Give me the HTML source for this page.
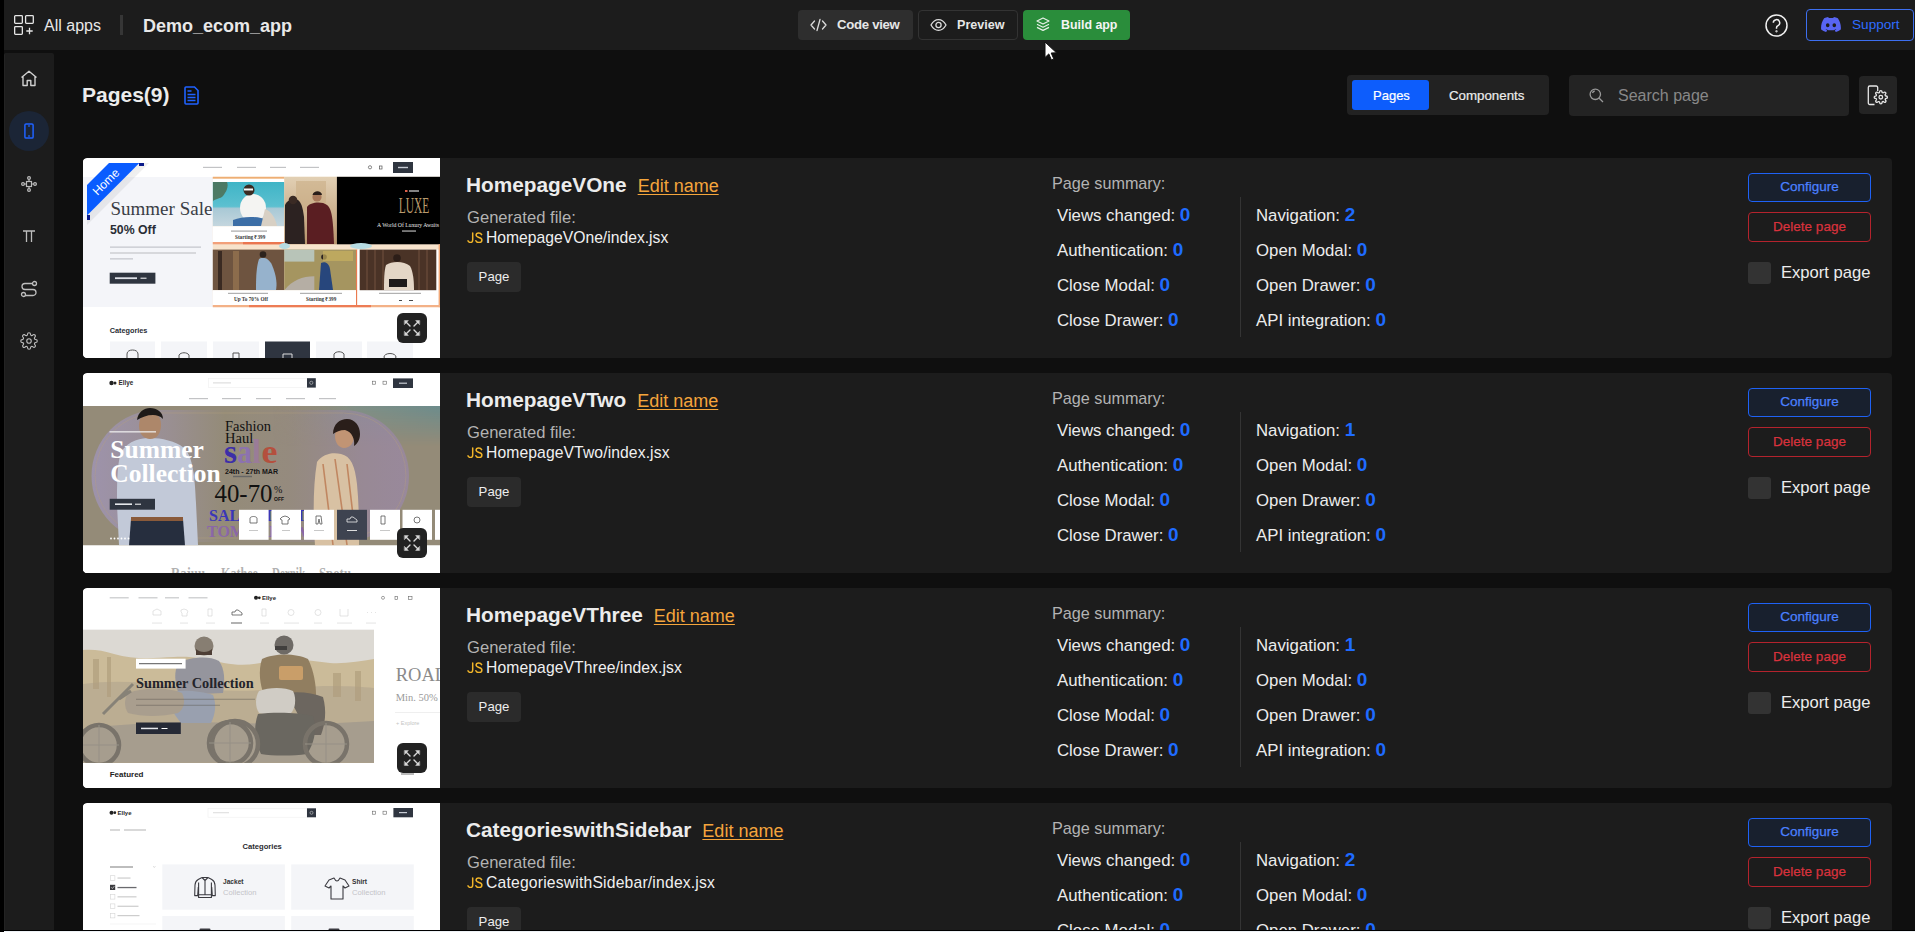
<!DOCTYPE html>
<html><head><meta charset="utf-8">
<style>
*{box-sizing:border-box;margin:0;padding:0}
html,body{width:1915px;height:932px;overflow:hidden;background:#0f0f0f;font-family:"Liberation Sans",sans-serif;color:#ececec}
.abs{position:absolute}
#blk{left:0;top:0;width:4px;height:932px;background:#000}
#hdr{left:4px;top:0;width:1911px;height:50px;background:#1c1c1c}
#side{left:4px;top:53px;width:50px;height:880px;background:#1c1c1c;border-radius:2px 2px 0 0;border-left:1px solid #232323}
.t{position:absolute;white-space:nowrap;line-height:1}
.btn{position:absolute;border-radius:4px}
.card{position:absolute;left:83px;width:1809px;height:200px;background:#1c1c1c;border-radius:4px;overflow:hidden}
.thumb{position:absolute;left:0;top:0;width:357px;height:200px;background:#fff;border-radius:4px 0 0 4px;overflow:hidden}
.ttl{left:383px;top:17px;font-size:20.8px;font-weight:700;color:#ececec}
.edit{margin-left:11px;font-weight:400;font-size:18px;color:#f5a53c;text-decoration:underline;text-underline-offset:2px;text-decoration-thickness:1px}
.gen{left:384px;top:52px;font-size:16.6px;color:#b3b3b3}
.js{left:384px;top:72px;font-size:14.5px;font-weight:400;color:#f0b429;letter-spacing:-1px}
.file{left:403px;top:72px;font-size:15.7px;color:#f0f0f0}
.chip{position:absolute;left:384px;top:104px;width:54px;height:30px;background:#2b2b2b;border-radius:4px;font-size:13.2px;color:#eee;text-align:center;line-height:30px}
.sum{left:969px;top:17px;font-size:16.2px;color:#b3b3b3}
.row{font-size:16.8px;color:#ececec}
.row b{color:#1f6bff;font-size:19px;font-weight:700}
.vdiv{position:absolute;left:1157px;top:39px;width:1px;height:140px;background:#343434}
.cfg{position:absolute;left:1665px;top:15px;width:123px;height:29px;border:1.5px solid #1f62f5;background:#18202e;border-radius:4px;color:#4b80ff;font-size:13.5px;-webkit-text-stroke:.25px #4b80ff;text-align:center;line-height:26px}
.del{position:absolute;left:1665px;top:54px;width:123px;height:30px;border:1.5px solid #b4232d;border-radius:4px;color:#d8323c;font-size:13.5px;-webkit-text-stroke:.25px #d8323c;text-align:center;line-height:27px}
.chk{position:absolute;left:1665px;top:104px;width:23px;height:22px;background:#333;border-radius:3px}
.exp{left:1698px;top:107px;font-size:16.6px;color:#ececec}
.expand{position:absolute;left:314px;top:155px;width:30px;height:30px;background:#222;border-radius:6px}
</style></head><body>
<div id="blk" class="abs"></div>
<div id="hdr" class="abs"></div>
<div id="side" class="abs"></div>

<!-- header -->
<svg class="abs" style="left:14px;top:15px" width="21" height="21" viewBox="0 0 21 21" fill="none" stroke="#e6e6e6" stroke-width="1.3">
<rect x="0.65" y="0.65" width="7.7" height="7.7" rx="0.8"/><rect x="11.6" y="0.65" width="7.7" height="7.7" rx="0.8"/><rect x="0.65" y="11.6" width="7.7" height="7.7" rx="0.8"/>
<path d="M15.5 12.8v6.4M12.3 16h6.4"/></svg>
<div class="t" style="left:44px;top:18px;font-size:16px;color:#e8e8e8">All apps</div>
<div class="abs" style="left:120px;top:15px;width:3px;height:20px;background:#363636"></div>
<div class="t" style="left:143px;top:17px;font-size:18px;font-weight:700;color:#e8e8e8">Demo_ecom_app</div>

<div class="btn" style="left:798px;top:10px;width:115px;height:30px;background:#2e2e2e"></div>
<div class="t" style="left:837px;top:18px;font-size:13.2px;font-weight:700;color:#e6e6e6;letter-spacing:-0.3px">Code view</div>
<div class="btn" style="left:918px;top:10px;width:100px;height:30px;border:1px solid #333"></div>
<div class="t" style="left:957px;top:19px;font-size:12.6px;font-weight:700;color:#e6e6e6">Preview</div>
<div class="btn" style="left:1023px;top:10px;width:107px;height:30px;background:#2a8d3b"></div>
<div class="t" style="left:1061px;top:19px;font-size:12.4px;font-weight:700;color:#f4f4f4">Build app</div>

<svg class="abs" style="left:1765px;top:14px" width="23" height="23" viewBox="0 0 23 23" fill="none" stroke="#f0f0f0" stroke-width="1.5">
<circle cx="11.5" cy="11.5" r="10.5"/><path d="M8.3 8.8a3.2 3.2 0 1 1 4.6 2.9c-.9.4-1.4 1.1-1.4 2.1v.9"/><circle cx="11.5" cy="17.3" r=".4" fill="#f0f0f0"/></svg>
<div class="btn" style="left:1806px;top:9px;width:108px;height:32px;border:1px solid #3d6ff0"></div>
<div class="t" style="left:1852px;top:18px;font-size:13.6px;color:#2f6cff">Support</div>

<!-- title row -->
<div class="t" style="left:82px;top:84px;font-size:21px;font-weight:700;color:#ececec">Pages(9)</div>
<div class="abs" style="left:1347px;top:75px;width:202px;height:40px;background:#222;border-radius:4px"></div>
<div class="btn" style="left:1352px;top:80px;width:77px;height:30px;background:#0d5dfc;border-radius:3px"></div>
<div class="t" style="left:1373px;top:89px;font-size:13px;color:#fff;-webkit-text-stroke:.2px #fff">Pages</div>
<div class="t" style="left:1449px;top:89px;font-size:13.3px;color:#ececec;-webkit-text-stroke:.2px #ececec">Components</div>
<div class="abs" style="left:1569px;top:75px;width:280px;height:41px;background:#232323;border-radius:4px"></div>
<div class="t" style="left:1618px;top:88px;font-size:16px;color:#888">Search page</div>
<div class="abs" style="left:1859px;top:76px;width:38px;height:38px;background:#242424;border-radius:4px"></div>


<svg class="abs" style="left:810px;top:17px" width="17" height="16" viewBox="0 0 17 16" fill="none" stroke="#dcdcdc" stroke-width="1.3" stroke-linecap="round" stroke-linejoin="round"><path d="M4.5 4L1 8l3.5 4M12.5 4L16 8l-3.5 4M10 2.5L7 13.5"/></svg>
<svg class="abs" style="left:930px;top:18px" width="17" height="14" viewBox="0 0 17 14" fill="none" stroke="#dcdcdc" stroke-width="1.3"><path d="M1 7c2-3.6 4.6-5.3 7.5-5.3S14 3.4 16 7c-2 3.6-4.6 5.3-7.5 5.3S3 10.6 1 7z"/><circle cx="8.5" cy="7" r="2.6"/></svg>
<svg class="abs" style="left:1036px;top:17px" width="14" height="15" viewBox="0 0 14 15" fill="none" stroke="#e8f0e8" stroke-width="1.2" stroke-linejoin="round"><path d="M7 1L1 4l6 3 6-3zM1 7.2l6 3 6-3M1 10.4l6 3 6-3"/></svg>
<svg class="abs" style="left:1044px;top:41px" width="14" height="20" viewBox="0 0 14 20"><path d="M1 1v15.5l3.8-3.6 2.6 6 2.4-1-2.6-5.9 5.3-.2z" fill="#fff" stroke="#111" stroke-width="1"/></svg>
<svg class="abs" style="left:1820px;top:17px" width="22" height="15" viewBox="0 0 127 96"><path fill="#5865f2" d="M107.7 8.1A105 105 0 0 0 81.5 0a72 72 0 0 0-3.4 6.8 97.7 97.7 0 0 0-29.1 0A72 72 0 0 0 45.6 0a105.9 105.9 0 0 0-26.3 8.1C2.7 32.6-1.8 56.6.4 80.2a105.7 105.7 0 0 0 32.2 16.1 77.7 77.7 0 0 0 6.9-11.1 68.4 68.4 0 0 1-10.9-5.2c.9-.7 1.8-1.4 2.6-2.1a75.6 75.6 0 0 0 64.3 0c.9.7 1.7 1.4 2.6 2.1a68.7 68.7 0 0 1-10.9 5.2 77 77 0 0 0 6.9 11.1 105.3 105.3 0 0 0 32.2-16.1c2.6-27.3-4.5-51.1-18.9-72.1zM42.5 65.7c-6.3 0-11.4-5.7-11.4-12.7s5-12.8 11.4-12.8S54 46 53.9 53s-5 12.7-11.4 12.7zm42.2 0c-6.2 0-11.4-5.7-11.4-12.7s5-12.8 11.4-12.8S96.2 46 96.1 53s-5 12.7-11.4 12.7z"/></svg>
<svg class="abs" style="left:184px;top:86px" width="15" height="19" viewBox="0 0 15 19" fill="none" stroke="#1f62ff" stroke-width="1.6"><path d="M2 1h8.5L14 4.5V17a1 1 0 0 1-1 1H2a1 1 0 0 1-1-1V2a1 1 0 0 1 1-1z"/><path d="M3.5 5h4M3.5 8.5h8M3.5 11.5h8M3.5 14.5h8" stroke-width="1.5"/></svg>
<svg class="abs" style="left:1589px;top:88px" width="15" height="15" viewBox="0 0 15 15" fill="none" stroke="#9a9a9a" stroke-width="1.3"><circle cx="6.3" cy="6.3" r="5.2"/><path d="M10.2 10.2l3.8 3.8M3.5 5a3 3 0 0 1 2.2-2" /></svg>
<svg class="abs" style="left:1866px;top:84px" width="24" height="24" viewBox="0 0 24 24" fill="none" stroke="#e6e6e6" stroke-width="1.3"><path d="M8.5 20.5H3.8a1.5 1.5 0 0 1-1.5-1.5V3.5A1.5 1.5 0 0 1 3.8 2h6.4a1.5 1.5 0 0 1 1.5 1.5V7"/><g transform="translate(7.6 6) scale(.6)" stroke-width="2.2"><circle cx="12" cy="12" r="3"/><path d="M19.4 15a1.7 1.7 0 0 0 .3 1.8l.1.1a2 2 0 1 1-2.8 2.8l-.1-.1a1.7 1.7 0 0 0-1.8-.3 1.7 1.7 0 0 0-1 1.5V21a2 2 0 1 1-4 0v-.1a1.7 1.7 0 0 0-1.1-1.5 1.7 1.7 0 0 0-1.8.3l-.1.1a2 2 0 1 1-2.8-2.8l.1-.1a1.7 1.7 0 0 0 .3-1.8 1.7 1.7 0 0 0-1.5-1H3a2 2 0 1 1 0-4h.1a1.7 1.7 0 0 0 1.5-1.1 1.7 1.7 0 0 0-.3-1.8l-.1-.1a2 2 0 1 1 2.8-2.8l.1.1a1.7 1.7 0 0 0 1.8.3H9a1.7 1.7 0 0 0 1-1.5V3a2 2 0 1 1 4 0v.1a1.7 1.7 0 0 0 1 1.5 1.7 1.7 0 0 0 1.8-.3l.1-.1a2 2 0 1 1 2.8 2.8l-.1.1a1.7 1.7 0 0 0-.3 1.8V9a1.7 1.7 0 0 0 1.5 1H21a2 2 0 1 1 0 4h-.1a1.7 1.7 0 0 0-1.5 1z"/></g></svg>
<!-- sidebar -->
<svg class="abs" style="left:20px;top:70px" width="18" height="17" viewBox="0 0 18 17" fill="none" stroke="#cfcfcf" stroke-width="1.4" stroke-linejoin="round"><path d="M1.5 7.5L9 1.2l7.5 6.3M3 6.5V15.5h4.2v-5h3.6v5H15V6.5"/></svg>
<div class="abs" style="left:9px;top:111px;width:40px;height:40px;border-radius:50%;background:#1b2536"></div>
<svg class="abs" style="left:24px;top:123px" width="10" height="16" viewBox="0 0 10 16" fill="none" stroke="#1f62ff" stroke-width="1.5"><rect x="0.9" y="0.9" width="8.2" height="14.2" rx="1.2"/><path d="M4.2 3h1.6M4.2 13h1.6"/></svg>
<svg class="abs" style="left:21px;top:176px" width="16" height="16" viewBox="0 0 16 16" fill="none" stroke="#bdbdbd" stroke-width="1.2"><rect x="5.5" y="5.5" width="5" height="5"/><circle cx="8" cy="2" r="1.4"/><circle cx="8" cy="14" r="1.4"/><circle cx="2" cy="8" r="1.4"/><circle cx="14" cy="8" r="1.4"/><path d="M8 3.4v2.1M8 10.5v2.1M3.4 8h2.1M10.5 8h2.1"/></svg>
<svg class="abs" style="left:22px;top:229px" width="14" height="14" viewBox="0 0 14 14" fill="none" stroke="#bdbdbd" stroke-width="1.3"><path d="M1 2h12M4.5 2v11M9.5 2v11"/></svg>
<svg class="abs" style="left:20px;top:280px" width="18" height="18" viewBox="0 0 18 18" fill="none" stroke="#bdbdbd" stroke-width="1.3"><circle cx="3.5" cy="14.5" r="2"/><circle cx="14.5" cy="3.5" r="2"/><path d="M12.5 3.5H5a3 3 0 0 0 0 6h8a3 3 0 0 1 0 6H5.5"/></svg>
<svg class="abs" style="left:20px;top:332px" width="18" height="18" viewBox="0 0 24 24" fill="none" stroke="#bdbdbd" stroke-width="1.5"><circle cx="12" cy="12" r="3"/><path d="M19.4 15a1.7 1.7 0 0 0 .3 1.8l.1.1a2 2 0 1 1-2.8 2.8l-.1-.1a1.7 1.7 0 0 0-1.8-.3 1.7 1.7 0 0 0-1 1.5V21a2 2 0 1 1-4 0v-.1a1.7 1.7 0 0 0-1.1-1.5 1.7 1.7 0 0 0-1.8.3l-.1.1a2 2 0 1 1-2.8-2.8l.1-.1a1.7 1.7 0 0 0 .3-1.8 1.7 1.7 0 0 0-1.5-1H3a2 2 0 1 1 0-4h.1a1.7 1.7 0 0 0 1.5-1.1 1.7 1.7 0 0 0-.3-1.8l-.1-.1a2 2 0 1 1 2.8-2.8l.1.1a1.7 1.7 0 0 0 1.8.3H9a1.7 1.7 0 0 0 1-1.5V3a2 2 0 1 1 4 0v.1a1.7 1.7 0 0 0 1 1.5 1.7 1.7 0 0 0 1.8-.3l.1-.1a2 2 0 1 1 2.8 2.8l-.1.1a1.7 1.7 0 0 0-.3 1.8V9a1.7 1.7 0 0 0 1.5 1H21a2 2 0 1 1 0 4h-.1a1.7 1.7 0 0 0-1.5 1z"/></svg>
<div class="abs" style="left:4px;top:930px;width:1911px;height:1px;background:#000;z-index:10"></div>
<div class="abs" style="left:4px;top:931px;width:1911px;height:1px;background:#eef2f6;z-index:10"></div>
<div id="cards"><div class="card" style="top:158px">
<div class="thumb"><svg width="357" height="199" viewBox="0 0 357 199" style="position:absolute;left:0;top:1px" font-family="Liberation Sans">
<defs>
<linearGradient id="t0sky" x1="0" y1="0" x2="0" y2="1"><stop offset="0" stop-color="#3fb4c6"/><stop offset="0.55" stop-color="#5cc0d0"/><stop offset="0.6" stop-color="#a9c9d6"/><stop offset="1" stop-color="#c4d6de"/></linearGradient>
<linearGradient id="t0mid" x1="0" y1="0" x2="0" y2="1"><stop offset="0" stop-color="#e2d0b4"/><stop offset="1" stop-color="#b8946c"/></linearGradient>
<linearGradient id="t0shadow" x1="0" y1="0" x2="1" y2="1"><stop offset="0" stop-color="#000" stop-opacity=".12"/><stop offset="1" stop-color="#000" stop-opacity="0"/></linearGradient>
</defs>
<rect width="357" height="199" fill="#fff"/>
<rect x="0" y="18" width="131" height="130" fill="#f4f5f9"/>
<g fill="#9a9ca0" opacity=".6"><rect x="120" y="7.8" width="19" height="1.2"/><rect x="154" y="7.8" width="19" height="1.2"/><rect x="187" y="7.8" width="16" height="1.2"/><rect x="217" y="7.8" width="19" height="1.2"/></g>
<circle cx="287" cy="8.3" r="1.6" fill="none" stroke="#555" stroke-width=".7"/><rect x="296.5" y="7" width="2.5" height="3" fill="none" stroke="#555" stroke-width=".7"/>
<rect x="310" y="3" width="20" height="11" fill="#2f3540"/><rect x="315" y="7.8" width="10" height="1.4" fill="#c8ccd4"/>
<text x="27.5" y="55.7" font-family="Liberation Serif" font-size="19" fill="#3a3d45">Summer Sale</text>
<text x="27" y="75.2" font-weight="700" font-size="12.3" fill="#2a2d35">50% Off</text>
<g fill="#8a8c94" opacity=".55"><rect x="27" y="87.6" width="91" height="1"/><rect x="27" y="93.5" width="86" height="1"/><rect x="27" y="99.4" width="23" height="1"/></g>
<rect x="26.7" y="113.7" width="45.7" height="11" fill="#2f3540"/><rect x="32" y="118.3" width="22" height="1.8" fill="#dfe2e8"/><path d="M57.5 119.2h6" stroke="#fff" stroke-width="1"/>
<!-- collage -->
<rect x="129.8" y="17.8" width="227.2" height="130.4" fill="#f7e3cc"/>
<rect x="129.8" y="17.8" width="71.5" height="2" fill="#eeae74"/>
<rect x="129.8" y="19.8" width="71.5" height="3.4" fill="#fff"/>
<rect x="129.8" y="23" width="71.5" height="44.3" fill="url(#t0sky)"/>
<path d="M130 23h14c2 5-1 10-4 14-3 3-6 2-10 5z" fill="#4d6f52" opacity=".85"/>
<ellipse cx="170" cy="49" rx="13" ry="14" fill="#f4f4f2"/>
<circle cx="166" cy="31" r="5.5" fill="#3a2b22"/><rect x="161" y="29.5" width="9" height="2" fill="#f8f8f8"/>
<path d="M150 61c10-4 25-4 34 0v6h-34z" fill="#3c6ea6"/>
<path d="M182 50c6 2 10 8 12 17h-16z" fill="#d8d0c4"/>
<rect x="129.8" y="67.3" width="71.5" height="15.7" fill="#fff"/>
<rect x="148" y="71.5" width="36" height="1.2" fill="#a8a8a8"/>
<text x="152" y="80" font-family="Liberation Serif" font-weight="700" font-size="5.2" fill="#333">Starting ₹399</text>
<rect x="129.8" y="83" width="71.5" height="2.3" fill="#f2a07a"/><rect x="160" y="83" width="41" height="2.3" fill="#ea7650"/>
<rect x="201.3" y="17.8" width="52.6" height="67.5" fill="url(#t0mid)"/>
<rect x="213" y="22" width="30" height="30" fill="#c9ad86" opacity=".6"/>
<path d="M202 46c3-6 9-7 13-5 4 3 5 10 6 17l1 27h-20z" fill="#2c2221"/>
<circle cx="210" cy="41" r="4.3" fill="#3a2a24"/>
<path d="M224 48c3-5 15-6 20-2 5 4 6 14 7 39h-27z" fill="#5a1e22"/>
<circle cx="234" cy="38" r="4.6" fill="#a8785a"/><path d="M229.5 36c1-5 9-5 9.5 0z" fill="#2a1e1a"/>
<rect x="253.9" y="17.8" width="103.1" height="67.5" fill="#000"/>
<rect x="322" y="31" width="2.5" height="2" fill="#e0604a"/><rect x="326" y="31.3" width="10" height="1.4" fill="#bbb"/>
<text x="315.7" y="53.8" font-family="Liberation Serif" font-size="23" fill="#b99a6c" textLength="30.5" lengthAdjust="spacingAndGlyphs">LUXE</text>
<text x="294" y="67.8" font-family="Liberation Serif" font-size="5.5" fill="#e8e8e8" textLength="62" lengthAdjust="spacingAndGlyphs">A World Of Luxury Awaits</text>
<rect x="319" y="71.4" width="14" height="1.3" fill="#aaa"/>
<ellipse cx="201.5" cy="87" rx="5.5" ry="3" fill="#b6dbe2"/><ellipse cx="278" cy="87" rx="11" ry="3" fill="#b6dbe2"/>
<rect x="129.8" y="90.6" width="71.5" height="40.6" fill="#6e5440"/>
<rect x="135" y="92" width="4" height="39" fill="#3a2a22"/><rect x="150" y="92" width="6" height="39" fill="#8c6c4c"/>
<path d="M176 100c5-3 10 0 13 6 5 12 5 20 4 25h-20c0-10 0-22 3-31z" fill="#96b2cc"/>
<circle cx="180" cy="95.5" r="3.3" fill="#2c221c"/>
<rect x="201.3" y="90.6" width="71.7" height="40.6" fill="#a59560"/>
<rect x="201.3" y="90.6" width="30" height="12" fill="#b8c4b8"/>
<path d="M201.3 131.2c8-10 18-14 30-14v14z" fill="#b5aea4"/>
<path d="M238 104c4-2 8 0 9 6l3 21h-14z" fill="#27467c"/><circle cx="241" cy="98" r="2.8" fill="#2a2220"/>
<rect x="240" y="92" width="30" height="10" fill="#c8b060" opacity=".7"/>
<rect x="273" y="90.6" width="1.3" height="55.4" fill="#ea7a50"/>
<rect x="274.3" y="90.6" width="82.7" height="57.6" fill="#fff"/>
<rect x="276.7" y="90.6" width="76.6" height="40.6" fill="#4a3326"/>
<g fill="#5e4232"><rect x="283" y="91" width="2" height="40"/><rect x="291" y="91" width="2" height="40"/><rect x="299" y="91" width="2" height="40"/><rect x="335" y="91" width="2" height="40"/><rect x="343" y="91" width="2" height="40"/></g>
<path d="M303 106c6-4 18-4 24 1 3 5 4 14 4 24h-30c0-9 0-19 2-25z" fill="#e4d6c6"/><circle cx="314" cy="99" r="3.8" fill="#2c1e18"/>
<rect x="306" y="120" width="18" height="8" fill="#1e1a1a"/>
<rect x="355.6" y="85.3" width="1.4" height="62.9" fill="#f0a878"/>
<rect x="129.8" y="131.2" width="143.2" height="14.8" fill="#fff"/>
<g fill="#a9a9a9"><rect x="145" y="133.8" width="40" height="1.1"/><rect x="217" y="133.8" width="42" height="1.1"/><rect x="296" y="133.8" width="42" height="1.1"/></g>
<text x="151" y="142" font-family="Liberation Serif" font-weight="700" font-size="5.2" fill="#333">Up To 70% Off</text>
<text x="223" y="142" font-family="Liberation Serif" font-weight="700" font-size="5.2" fill="#333">Starting ₹399</text>
<path d="M316 141.5h3M326 141.5h4" stroke="#333" stroke-width=".9"/>
<rect x="129.8" y="146" width="227.2" height="2.2" fill="#f3b187"/><rect x="166" y="146" width="122" height="2.2" fill="#ed7c55"/>
<!-- home ribbon -->
<path d="M56.5 4L4 56.5V66L66 4z" fill="url(#t0shadow)"/>
<path d="M26 4H56.4L4 56.4V26z" fill="#0a5cff"/>
<rect x="56" y="4" width="5" height="3" fill="#0a1a8a"/><rect x="4" y="56" width="3" height="5" fill="#0a1a8a"/>
<text x="0" y="0" transform="translate(25.8 25.8) rotate(-45)" font-size="12" fill="#fff" text-anchor="middle">Home</text>
<!-- categories -->
<text x="26.7" y="174.4" font-weight="700" font-size="7.3" fill="#2a2d35">Categories</text>
<g fill="#f4f5f8"><rect x="27" y="182.5" width="45" height="17"/><rect x="78" y="182.5" width="46" height="17"/><rect x="130" y="182.5" width="46" height="17"/><rect x="233" y="182.5" width="46" height="17"/><rect x="284" y="182.5" width="46" height="17"/></g>
<rect x="182" y="182.5" width="45" height="17" fill="#2f3540"/>
<g fill="none" stroke="#555" stroke-width="1"><path d="M44 199v-4c0-3 3-4 5.5-4s5.5 1 5.5 4v4"/><path d="M96 199v-3c2-3 8-3 10 0v3"/><path d="M150 199v-5h6v5"/><path d="M251 199v-4c2-3 8-3 10 0v4"/><ellipse cx="307" cy="198" rx="6" ry="3.5"/></g>
<path d="M200 199v-4h9v4" fill="none" stroke="#ddd" stroke-width="1"/>
</svg>

<div class="expand"><svg width="30" height="30" viewBox="0 0 30 30" fill="#d8d8d8" stroke="#d8d8d8" stroke-width="1.5" stroke-linecap="round"><path d="M9 9l4 4M21 9l-4 4M9 21l4-4M21 21l-4-4" fill="none" stroke-width="1.4"/><path d="M7.6 7.6h3.8l-3.8 3.8zM22.4 7.6h-3.8l3.8 3.8zM7.6 22.4h3.8l-3.8-3.8zM22.4 22.4h-3.8l3.8-3.8z" stroke-width=".5" stroke-linejoin="round"/></svg></div>
</div>
<div class="t ttl">HomepageVOne<span class="edit">Edit name</span></div>
<div class="t gen">Generated file:</div>
<svg class="abs" style="left:384px;top:73.5px" width="16" height="11.5" viewBox="0 0 16 11.5" fill="none" stroke="#f0b429" stroke-width="1.5" stroke-linecap="round"><path d="M1 8.9c.6 1 1.4 1.6 2.4 1.6 1.4 0 2.3-.9 2.3-2.6V1"/><path d="M14.6 2.6c-.5-1.1-1.5-1.7-2.8-1.7-1.6 0-2.7.9-2.7 2.2 0 3 5.8 1.8 5.8 4.9 0 1.5-1.2 2.6-3 2.6-1.4 0-2.5-.7-3-1.8"/></svg>
<div class="t file" style="letter-spacing:0px">HomepageVOne/index.jsx</div>
<div class="chip">Page</div>
<div class="t sum">Page summary:</div>
<div class="vdiv"></div>
<div class="t row" style="left:974px;top:47px">Views changed: <b>0</b></div><div class="t row" style="left:974px;top:82px">Authentication: <b>0</b></div><div class="t row" style="left:974px;top:117px">Close Modal: <b>0</b></div><div class="t row" style="left:974px;top:152px">Close Drawer: <b>0</b></div><div class="t row" style="left:1173px;top:47px">Navigation: <b>2</b></div><div class="t row" style="left:1173px;top:82px">Open Modal: <b>0</b></div><div class="t row" style="left:1173px;top:117px">Open Drawer: <b>0</b></div><div class="t row" style="left:1173px;top:152px">API integration: <b>0</b></div>
<div class="cfg">Configure</div>
<div class="del">Delete page</div>
<div class="chk"></div>
<div class="t exp">Export page</div>
</div>
<div class="card" style="top:373px">
<div class="thumb"><svg width="357" height="199" viewBox="0 0 357 199" style="position:absolute;left:0;top:1px" font-family="Liberation Sans">
<defs>
<linearGradient id="t1top" x1="0" y1="0" x2="1" y2="0"><stop offset="0" stop-color="#958b79" stop-opacity="0"/><stop offset="0.5" stop-color="#7f8f86"/><stop offset="1" stop-color="#6c8c8c"/></linearGradient>
<linearGradient id="t1v" x1="0" y1="0" x2="0" y2="1"><stop offset="0" stop-color="#fff" stop-opacity="1"/><stop offset="1" stop-color="#fff" stop-opacity="0"/></linearGradient>
<linearGradient id="t1pill" x1="0" y1="0" x2="1" y2="0"><stop offset="0" stop-color="#9f94b4" stop-opacity=".85"/><stop offset=".25" stop-color="#a094b0" stop-opacity=".45"/><stop offset=".42" stop-color="#a094b0" stop-opacity="0"/><stop offset=".62" stop-color="#9a88a0" stop-opacity=".15"/><stop offset=".85" stop-color="#9a88a4" stop-opacity=".65"/><stop offset="1" stop-color="#9a88a4" stop-opacity=".8"/></linearGradient>
<mask id="t1m"><rect x="0" y="32" width="357" height="40" fill="url(#t1v)"/></mask>
</defs>
<rect width="357" height="199" fill="#fff"/>
<!-- nav -->
<circle cx="28.5" cy="9" r="2.2" fill="#222"/><circle cx="32" cy="9" r="1.5" fill="#222"/>
<text x="35.5" y="11.3" font-weight="700" font-size="6.3" fill="#2a2a2a">Ellye</text>
<rect x="125.4" y="4.4" width="99" height="9" fill="#fff" stroke="#efefef" stroke-width=".6"/>
<rect x="130" y="8.4" width="18" height="1" fill="#d8d8d8"/>
<rect x="224" y="4.2" width="8.8" height="9.4" fill="#2f3540"/><circle cx="228.3" cy="8.8" r="1.6" fill="none" stroke="#ccc" stroke-width=".6"/>
<rect x="289.5" y="7.2" width="3" height="3" fill="none" stroke="#666" stroke-width=".6"/><rect x="300" y="7.2" width="3.6" height="3" fill="none" stroke="#666" stroke-width=".6"/>
<rect x="310" y="4.4" width="20" height="9.6" fill="#2f3540"/><rect x="316" y="8.6" width="8" height="1.2" fill="#c8ccd4"/>
<g fill="#9a9ca0" opacity=".6"><rect x="106" y="24" width="19" height="1.2"/><rect x="139" y="24" width="19" height="1.2"/><rect x="173" y="24" width="15" height="1.2"/><rect x="203" y="24" width="19" height="1.2"/><rect x="236" y="24" width="17" height="1.2"/></g>
<!-- banner -->
<rect x="0" y="32" width="357" height="139.5" fill="#948b78"/>
<rect x="190" y="32" width="167" height="40" fill="url(#t1top)" mask="url(#t1m)"/>
<rect x="8.5" y="36" width="317.5" height="132" rx="66" fill="url(#t1pill)"/>
<rect x="12" y="39" width="311" height="125" rx="62.5" fill="none" stroke="#b8a27c" stroke-width=".6" opacity=".6"/>

<!-- man -->
<path d="M38 78c8-12 20-14 30-14s25 3 33 10c9 8 11 30 12 55l2 42H36l-2-40c0-22 0-40 4-53z" fill="#c2c9d8"/>
<path d="M48 145h52l2 26.5H46z" fill="#262e3e"/><rect x="48" y="143" width="52" height="4" fill="#8a5a3a"/>
<path d="M56 52c0-10 6-14 11-14 6 0 11 4 11 13 0 8-4 14-11 14-6 0-11-5-11-13z" fill="#ad876a"/>
<path d="M54 46c1-8 7-12 13-12 7 0 13 4 13 11-3-3-6-4-10-4-6 0-11 2-16 5z" fill="#1e1a18"/>
<!-- woman -->
<path d="M234 88c6-8 15-10 24-8 10 2 14 12 16 30 2 20 2 40 2 61.5h-44c-2-30-2-60 2-83.5z" fill="#d8c1a3"/>
<g stroke="#b4683e" stroke-width="1.6" opacity=".65"><path d="M240 90l10 81M252 85l12 86M264 90l7 60"/></g>
<path d="M252 62c0-7 5-11 10-11s9 4 9 11-4 12-10 12c-5 0-9-5-9-12z" fill="#c19474"/>
<path d="M250 60c0-10 7-15 14-15 8 0 13 7 13 15 0 6-3 10-6 12 1-7-2-14-9-16-5 0-9 2-12 4z" fill="#2a1e1a"/>
<!-- text -->
<rect x="26.5" y="57" width="46.5" height="1.6" fill="#f2f2f2" opacity=".75"/>
<text x="27.3" y="84" font-family="Liberation Serif" font-weight="700" font-size="25.5" fill="#fff">Summer</text>
<text x="27.3" y="108" font-family="Liberation Serif" font-weight="700" font-size="25.5" fill="#fff">Collection</text>
<rect x="26.7" y="124.8" width="45.3" height="10.9" fill="#2f3540"/><rect x="32" y="129.4" width="17" height="1.6" fill="#e6e8ec"/><path d="M52 130.2h6" stroke="#fff" stroke-width="1"/>
<g fill="#fff"><circle cx="28" cy="164.5" r=".9"/><circle cx="31.5" cy="164.5" r=".9"/><circle cx="35" cy="164.5" r=".9"/><circle cx="38.5" cy="164.5" r=".9"/><circle cx="42" cy="164.5" r=".9"/><circle cx="45.5" cy="164.5" r=".9"/></g>
<text x="142" y="56.8" font-family="Liberation Serif" font-size="14.5" fill="#111">Fashion</text>
<text x="142" y="68.5" font-family="Liberation Serif" font-size="14.5" fill="#111">Haul</text>
<g font-family="Liberation Serif" font-weight="700" font-size="33"><text x="141" y="88.5" fill="#3d2fa8" textLength="13" lengthAdjust="spacingAndGlyphs">s</text><text x="154" y="88.5" fill="#8c72b0" textLength="15" lengthAdjust="spacingAndGlyphs">a</text><text x="169" y="88.5" fill="#9a7c98" textLength="9" lengthAdjust="spacingAndGlyphs">l</text><text x="178.5" y="88.5" fill="#b4503e" textLength="16" lengthAdjust="spacingAndGlyphs">e</text></g>
<text x="142" y="99.6" font-weight="700" font-size="7.2" fill="#151515" textLength="53" lengthAdjust="spacingAndGlyphs">24th - 27th MAR</text>
<rect x="150" y="101.8" width="19" height="1.4" fill="#666"/>
<text x="131.5" y="128.3" font-family="Liberation Serif" font-size="25" fill="#111" textLength="58" lengthAdjust="spacingAndGlyphs">40-70</text>
<text x="191" y="119" font-family="Liberation Serif" font-size="10" fill="#111">%</text>
<text x="191" y="127" font-weight="700" font-size="5" fill="#111">OFF</text>
<text x="126" y="147" font-family="Liberation Serif" font-weight="700" font-size="16" fill="#3a36b8">SALE STARTS</text>
<text x="124" y="163" font-family="Liberation Serif" font-weight="700" font-size="16" fill="#8a66a8">TOMORROW</text>
<!-- tiles -->
<g fill="#fff"><rect x="156" y="135.8" width="29.6" height="30"/><rect x="188.5" y="135.8" width="29.5" height="30"/><rect x="221" y="135.8" width="30" height="30"/><rect x="287" y="135.8" width="30" height="30"/><rect x="319.5" y="135.8" width="29.5" height="30"/><rect x="352" y="135.8" width="5" height="30"/></g>
<rect x="254" y="135.8" width="30" height="30" fill="#3e4350"/>
<g fill="none" stroke="#555" stroke-width=".8"><path d="M167 149v-5c1-2 6-2 7 0v5z"/><path d="M199 143l3-1 3 1 2 2-2 1v4h-6v-4l-2-1z"/><path d="M233 142h5l1 8h-2l-1-5-1 5h-2z"/><path d="M298 142h4v8h-4z"/><circle cx="334" cy="146" r="3"/></g>
<path d="M264 148h10v-2l-4-3h-2l-1 2h-3z" fill="none" stroke="#eee" stroke-width=".8"/>
<g fill="#c8c8c8"><rect x="166" y="156" width="9" height="1"/><rect x="199" y="156" width="8" height="1"/><rect x="231" y="156" width="10" height="1"/><rect x="297" y="156" width="10" height="1"/></g><rect x="264" y="156" width="10" height="1" fill="#ddd"/>
<!-- bottom -->
<rect x="0" y="171.5" width="357" height="27.5" fill="#fff"/>
<g font-family="Liberation Serif" font-weight="700" font-size="16" fill="#b0b0b0"><text x="88" y="205" textLength="34" lengthAdjust="spacingAndGlyphs">Rajuu</text><text x="138" y="205" textLength="37" lengthAdjust="spacingAndGlyphs">Kathee</text><text x="189" y="205" textLength="33" lengthAdjust="spacingAndGlyphs">Dernik</text><text x="236" y="205" textLength="32" lengthAdjust="spacingAndGlyphs">Spotu</text></g>
</svg>

<div class="expand"><svg width="30" height="30" viewBox="0 0 30 30" fill="#d8d8d8" stroke="#d8d8d8" stroke-width="1.5" stroke-linecap="round"><path d="M9 9l4 4M21 9l-4 4M9 21l4-4M21 21l-4-4" fill="none" stroke-width="1.4"/><path d="M7.6 7.6h3.8l-3.8 3.8zM22.4 7.6h-3.8l3.8 3.8zM7.6 22.4h3.8l-3.8-3.8zM22.4 22.4h-3.8l3.8-3.8z" stroke-width=".5" stroke-linejoin="round"/></svg></div>
</div>
<div class="t ttl">HomepageVTwo<span class="edit">Edit name</span></div>
<div class="t gen">Generated file:</div>
<svg class="abs" style="left:384px;top:73.5px" width="16" height="11.5" viewBox="0 0 16 11.5" fill="none" stroke="#f0b429" stroke-width="1.5" stroke-linecap="round"><path d="M1 8.9c.6 1 1.4 1.6 2.4 1.6 1.4 0 2.3-.9 2.3-2.6V1"/><path d="M14.6 2.6c-.5-1.1-1.5-1.7-2.8-1.7-1.6 0-2.7.9-2.7 2.2 0 3 5.8 1.8 5.8 4.9 0 1.5-1.2 2.6-3 2.6-1.4 0-2.5-.7-3-1.8"/></svg>
<div class="t file" style="letter-spacing:0.1px">HomepageVTwo/index.jsx</div>
<div class="chip">Page</div>
<div class="t sum">Page summary:</div>
<div class="vdiv"></div>
<div class="t row" style="left:974px;top:47px">Views changed: <b>0</b></div><div class="t row" style="left:974px;top:82px">Authentication: <b>0</b></div><div class="t row" style="left:974px;top:117px">Close Modal: <b>0</b></div><div class="t row" style="left:974px;top:152px">Close Drawer: <b>0</b></div><div class="t row" style="left:1173px;top:47px">Navigation: <b>1</b></div><div class="t row" style="left:1173px;top:82px">Open Modal: <b>0</b></div><div class="t row" style="left:1173px;top:117px">Open Drawer: <b>0</b></div><div class="t row" style="left:1173px;top:152px">API integration: <b>0</b></div>
<div class="cfg">Configure</div>
<div class="del">Delete page</div>
<div class="chk"></div>
<div class="t exp">Export page</div>
</div>
<div class="card" style="top:588px">
<div class="thumb"><svg width="357" height="199" viewBox="0 0 357 199" style="position:absolute;left:0;top:1px" font-family="Liberation Sans">
<defs>
<linearGradient id="t2sky" x1="0" y1="0" x2="0" y2="1"><stop offset="0" stop-color="#dcdad6"/><stop offset=".25" stop-color="#d4d0c8"/><stop offset=".45" stop-color="#c2b496"/><stop offset="1" stop-color="#a89a80"/></linearGradient>
</defs>
<rect width="357" height="199" fill="#fff"/>
<g fill="#9a9ca0" opacity=".55"><rect x="26.7" y="8.2" width="19" height="1.2"/><rect x="55.5" y="8.2" width="19" height="1.2"/><rect x="82" y="8.2" width="14" height="1.2"/><rect x="105.5" y="8.2" width="19" height="1.2"/></g>
<circle cx="173" cy="8.8" r="2" fill="#222"/><circle cx="176.3" cy="8.8" r="1.4" fill="#222"/>
<text x="179" y="11" font-weight="700" font-size="6" fill="#2a2a2a">Ellye</text>
<g fill="none" stroke="#666" stroke-width=".6"><circle cx="300" cy="8.8" r="1.5"/><rect x="312" y="7.3" width="2.6" height="3"/><rect x="325.5" y="7.3" width="3.5" height="3"/></g>
<g fill="none" stroke="#d2d2d2" stroke-width=".6"><path d="M70 26h8v-4l-4-2-4 2z"/><path d="M98 21l3-1 3 1 1 2-1 1v3h-5v-3l-1-1z"/><path d="M125 20h4v7h-4z"/><path d="M179 20h4v7h-4z"/><circle cx="208" cy="23.5" r="3"/><circle cx="235" cy="23.5" r="3"/><path d="M257 20v7h8v-7"/><path d="M284 23.5h1M288 23.5h1M292 23.5h1"/></g>
<path d="M149 26h10v-2l-4-3h-2l-1 2h-3z" fill="none" stroke="#444" stroke-width=".7"/>
<g fill="#e2e2e2"><rect x="69" y="33.6" width="10" height=".9"/><rect x="97" y="33.6" width="8" height=".9"/><rect x="123" y="33.6" width="9" height=".9"/><rect x="177" y="33.6" width="9" height=".9"/><rect x="201" y="33.6" width="15" height=".9"/><rect x="231" y="33.6" width="8" height=".9"/><rect x="254" y="33.6" width="15" height=".9"/><rect x="283" y="33.6" width="10" height=".9"/></g>
<rect x="148" y="33.5" width="11" height="1" fill="#666"/>
<!-- photo -->
<clipPath id="t2c"><rect x="0" y="40.4" width="291" height="133.3"/></clipPath>
<g clip-path="url(#t2c)">
<rect x="0" y="40.4" width="291" height="133.3" fill="#d8d5cf"/>
<path d="M0 61c8-1 20 0 31 4 20 6 40 4 60 3 18-1 32 2 50 6 16 3 30 2 46-2 20-4 40 0 60 2 16 1 30-2 44-4v108H0z" fill="#c6b48e"/>
<path d="M0 95c30-4 60-2 90 2 40 6 80 6 120 2 30-3 60-2 81 0v76H0z" fill="#b4a486"/>
<g fill="#a89470" opacity=".7"><rect x="10" y="70" width="6" height="30"/><rect x="24" y="68" width="4" height="40"/><rect x="250" y="84" width="8" height="24"/><rect x="272" y="82" width="6" height="30"/></g>
<path d="M0 140c40-6 100-8 160-6 60 2 100 0 131-2v42H0z" fill="#9c9282"/>
<!-- rider 1 -->
<path d="M96 74c10-6 30-8 40-2 6 8 6 20 4 32l-44 2c-4-12-6-24 0-32z" fill="#8a8a92"/>
<circle cx="121" cy="57" r="9.5" fill="#7a7062"/><path d="M113 60c4 4 12 4 16 0v6h-16z" fill="#3a2a20"/>
<path d="M82 104c16-4 36-2 48 2 4 10 2 20-2 28l-30 0c-6-8-14-18-16-30z" fill="#8e96a6"/>
<path d="M45 104c16-6 40-6 54 0 4 8 2 16-4 20-16 4-36 4-50 0-4-6-4-14 0-20z" fill="#a09482"/>
<!-- rider 2 -->
<path d="M179 70c12-6 34-6 46 0 6 12 8 26 8 36h-52c-4-10-6-24-2-36z" fill="#85704f"/>
<rect x="196" y="77" width="24" height="14" rx="2" fill="#c39458"/>
<circle cx="201" cy="56" r="9.5" fill="#5e5a54"/><path d="M192 57h12v4h-12z" fill="#2c2a28"/>
<path d="M204 104c12-2 26 0 36 4 4 14 2 28-2 38h-14c-4-12-12-26-20-42z" fill="#5c554d"/>
<path d="M176 102c10-4 26-4 34 0 4 8 2 18-2 22-10 2-24 2-32 0-4-6-4-16 0-22z" fill="#cbc7bf"/>
<path d="M175 125c14-2 40-2 55 2 4 12 2 26-6 38-14 2-34 2-46 0-6-12-8-26-3-40z" fill="#5a564e"/>
<!-- wheels -->
<g fill="none" stroke="#6a645a" stroke-width="4.5"><circle cx="16" cy="156" r="20"/><circle cx="147" cy="154" r="21"/><circle cx="152" cy="155" r="23"/><circle cx="243" cy="155" r="21"/></g>
<g fill="none" stroke="#8a8478" stroke-width="1"><path d="M16 136v40M0 156h36M147 133v42M126 154h42M243 134v42M222 155h42"/></g>
<path d="M20 125l30-30M36 110l12-8" stroke="#7a7468" stroke-width="3"/>
</g>
<rect x="0" y="40.4" width="291" height="133.3" fill="#fff" opacity=".1"/>
<rect x="53" y="69.7" width="49.6" height="9.9" fill="#fff"/><rect x="56" y="74.2" width="43" height="1" fill="#555"/>
<text x="53" y="99" font-family="Liberation Serif" font-weight="700" font-size="14.3" fill="#24242a">Summer Collection</text>
<g fill="#5a5650" opacity=".6"><rect x="53" y="109.8" width="119" height=".8"/><rect x="53" y="115.8" width="84" height=".8"/></g>
<rect x="53" y="133.5" width="44.8" height="11.5" fill="#262a36"/><rect x="58" y="138.7" width="17" height="1.5" fill="#e6e8ec"/><path d="M78.5 139.5h6" stroke="#fff" stroke-width="1"/>
<!-- right -->
<text x="312.7" y="91.7" font-family="Liberation Serif" font-size="18.5" fill="#8a8a8a">ROAD</text>
<text x="312.7" y="111.5" font-family="Liberation Serif" font-size="10.5" fill="#9a9a9a">Min. 50% Off</text>
<rect x="312" y="123" width="45" height=".8" fill="#ececec"/>
<text x="313" y="135.5" font-size="5.5" fill="#c4c4c4">+ Explore</text>
<text x="26.7" y="188" font-weight="700" font-size="8" fill="#222">Featured</text>
<rect x="318" y="184.5" width="13" height="1" fill="#777"/>
</svg>

<div class="expand"><svg width="30" height="30" viewBox="0 0 30 30" fill="#d8d8d8" stroke="#d8d8d8" stroke-width="1.5" stroke-linecap="round"><path d="M9 9l4 4M21 9l-4 4M9 21l4-4M21 21l-4-4" fill="none" stroke-width="1.4"/><path d="M7.6 7.6h3.8l-3.8 3.8zM22.4 7.6h-3.8l3.8 3.8zM7.6 22.4h3.8l-3.8-3.8zM22.4 22.4h-3.8l3.8-3.8z" stroke-width=".5" stroke-linejoin="round"/></svg></div>
</div>
<div class="t ttl">HomepageVThree<span class="edit">Edit name</span></div>
<div class="t gen">Generated file:</div>
<svg class="abs" style="left:384px;top:73.5px" width="16" height="11.5" viewBox="0 0 16 11.5" fill="none" stroke="#f0b429" stroke-width="1.5" stroke-linecap="round"><path d="M1 8.9c.6 1 1.4 1.6 2.4 1.6 1.4 0 2.3-.9 2.3-2.6V1"/><path d="M14.6 2.6c-.5-1.1-1.5-1.7-2.8-1.7-1.6 0-2.7.9-2.7 2.2 0 3 5.8 1.8 5.8 4.9 0 1.5-1.2 2.6-3 2.6-1.4 0-2.5-.7-3-1.8"/></svg>
<div class="t file" style="letter-spacing:0.1px">HomepageVThree/index.jsx</div>
<div class="chip">Page</div>
<div class="t sum">Page summary:</div>
<div class="vdiv"></div>
<div class="t row" style="left:974px;top:47px">Views changed: <b>0</b></div><div class="t row" style="left:974px;top:82px">Authentication: <b>0</b></div><div class="t row" style="left:974px;top:117px">Close Modal: <b>0</b></div><div class="t row" style="left:974px;top:152px">Close Drawer: <b>0</b></div><div class="t row" style="left:1173px;top:47px">Navigation: <b>1</b></div><div class="t row" style="left:1173px;top:82px">Open Modal: <b>0</b></div><div class="t row" style="left:1173px;top:117px">Open Drawer: <b>0</b></div><div class="t row" style="left:1173px;top:152px">API integration: <b>0</b></div>
<div class="cfg">Configure</div>
<div class="del">Delete page</div>
<div class="chk"></div>
<div class="t exp">Export page</div>
</div>
<div class="card" style="top:803px">
<div class="thumb"><svg width="357" height="199" viewBox="0 0 357 199" style="position:absolute;left:0;top:1px" font-family="Liberation Sans">
<rect width="357" height="199" fill="#fff"/>
<circle cx="28.5" cy="8.7" r="2" fill="#222"/><circle cx="31.8" cy="8.7" r="1.4" fill="#222"/>
<text x="34.5" y="11" font-weight="700" font-size="6" fill="#2a2a2a">Ellye</text>
<rect x="125" y="4.5" width="99" height="8.7" fill="#fff" stroke="#efefef" stroke-width=".6"/>
<rect x="130" y="8.3" width="16" height=".9" fill="#d8d8d8"/>
<rect x="224" y="4.3" width="9" height="9" fill="#2f3540"/><circle cx="228.5" cy="8.8" r="1.5" fill="none" stroke="#ccc" stroke-width=".6"/>
<g fill="none" stroke="#666" stroke-width=".6"><rect x="289.5" y="7.2" width="3" height="3"/><rect x="300" y="7.2" width="3.6" height="3"/></g>
<rect x="310.4" y="4" width="19.6" height="9.3" fill="#2f3540"/><rect x="316" y="8" width="8" height="1.2" fill="#c8ccd4"/>
<g fill="#b4b4b4"><rect x="27" y="25.5" width="10" height="1"/><rect x="41" y="25.5" width="22" height="1"/></g>
<text x="159.6" y="44.6" font-weight="700" font-size="7.6" fill="#2a2a30">Categories</text>
<rect x="27" y="62.3" width="23" height="1.4" fill="#8a8a8a" opacity=".8"/><path d="M70.5 62.5l.8.8.8-.8" fill="none" stroke="#888" stroke-width=".5"/>
<g fill="none" stroke="#d4d4d4" stroke-width=".6"><rect x="27.3" y="71.7" width="4.6" height="4.6"/><rect x="27.3" y="90.5" width="4.6" height="4.6"/><rect x="27.3" y="99.9" width="4.6" height="4.6"/><rect x="27.3" y="109.3" width="4.6" height="4.6"/></g>
<rect x="27" y="80.8" width="5.2" height="5.2" fill="#3a3a3e"/><path d="M28.2 83.3l1.2 1.2 2-2.4" fill="none" stroke="#fff" stroke-width=".6"/>
<g fill="#c8c8c8"><rect x="34.5" y="73.5" width="13" height="1.1"/><rect x="34.5" y="92.3" width="19" height="1.1"/><rect x="34.5" y="101.7" width="21" height="1.1"/><rect x="34.5" y="111.1" width="22" height="1.1"/></g>
<rect x="34.5" y="82.9" width="19" height="1.3" fill="#6a6a6e"/>
<rect x="27" y="119.7" width="46" height=".6" fill="#eee"/>
<g fill="#f4f5f8"><rect x="79.3" y="60.4" width="122.6" height="45.3"/><rect x="208.2" y="60.4" width="122.6" height="45.3"/><rect x="79.3" y="112" width="122.6" height="20"/><rect x="208.2" y="112" width="122.6" height="20"/></g>
<g fill="none" stroke="#3a3a40" stroke-width="1.1" stroke-linejoin="round"><path d="M119 73.5h6M119 73.5l-3.8 1.9c-2 1-3 3-3.2 5.6l-.3 10.6h3l.6-8.6M125 73.5l3.8 1.9c2 1 3 3 3.2 5.6l.3 10.6h-3l-.6-8.6M115.6 78.5v15h12.8v-15M115.8 90.8h12.4M122 76.5v14.3M119 73.5l3 3 3-3"/><path d="M246 76l5-2c1 2 2 3 3 3s2-1 3-3l5 2 4 6-4 2-2-2v13h-12v-13l-2 2-4-2z"/></g>
<text x="140" y="80" font-weight="700" font-size="6.6" fill="#333">Jacket</text>
<text x="140" y="91.2" font-size="6.8" fill="#c4c4c8" textLength="33.5" lengthAdjust="spacingAndGlyphs">Collection</text>
<text x="269" y="80" font-weight="700" font-size="6.6" fill="#333">Shirt</text>
<text x="269" y="91.2" font-size="6.8" fill="#c4c4c8" textLength="33.5" lengthAdjust="spacingAndGlyphs">Collection</text>
<rect x="116.5" y="124.5" width="11" height="3" rx="1.2" fill="#3a3a40"/><rect x="245.5" y="124.5" width="11" height="3" rx="1.2" fill="#3a3a40"/>
</svg>

<div class="expand"><svg width="30" height="30" viewBox="0 0 30 30" fill="#d8d8d8" stroke="#d8d8d8" stroke-width="1.5" stroke-linecap="round"><path d="M9 9l4 4M21 9l-4 4M9 21l4-4M21 21l-4-4" fill="none" stroke-width="1.4"/><path d="M7.6 7.6h3.8l-3.8 3.8zM22.4 7.6h-3.8l3.8 3.8zM7.6 22.4h3.8l-3.8-3.8zM22.4 22.4h-3.8l3.8-3.8z" stroke-width=".5" stroke-linejoin="round"/></svg></div>
</div>
<div class="t ttl">CategorieswithSidebar<span class="edit">Edit name</span></div>
<div class="t gen">Generated file:</div>
<svg class="abs" style="left:384px;top:73.5px" width="16" height="11.5" viewBox="0 0 16 11.5" fill="none" stroke="#f0b429" stroke-width="1.5" stroke-linecap="round"><path d="M1 8.9c.6 1 1.4 1.6 2.4 1.6 1.4 0 2.3-.9 2.3-2.6V1"/><path d="M14.6 2.6c-.5-1.1-1.5-1.7-2.8-1.7-1.6 0-2.7.9-2.7 2.2 0 3 5.8 1.8 5.8 4.9 0 1.5-1.2 2.6-3 2.6-1.4 0-2.5-.7-3-1.8"/></svg>
<div class="t file" style="letter-spacing:0.19px">CategorieswithSidebar/index.jsx</div>
<div class="chip">Page</div>
<div class="t sum">Page summary:</div>
<div class="vdiv"></div>
<div class="t row" style="left:974px;top:47px">Views changed: <b>0</b></div><div class="t row" style="left:974px;top:82px">Authentication: <b>0</b></div><div class="t row" style="left:974px;top:117px">Close Modal: <b>0</b></div><div class="t row" style="left:974px;top:152px">Close Drawer: <b>0</b></div><div class="t row" style="left:1173px;top:47px">Navigation: <b>2</b></div><div class="t row" style="left:1173px;top:82px">Open Modal: <b>0</b></div><div class="t row" style="left:1173px;top:117px">Open Drawer: <b>0</b></div><div class="t row" style="left:1173px;top:152px">API integration: <b>0</b></div>
<div class="cfg">Configure</div>
<div class="del">Delete page</div>
<div class="chk"></div>
<div class="t exp">Export page</div>
</div></div><!--/cards-->
</body></html>
